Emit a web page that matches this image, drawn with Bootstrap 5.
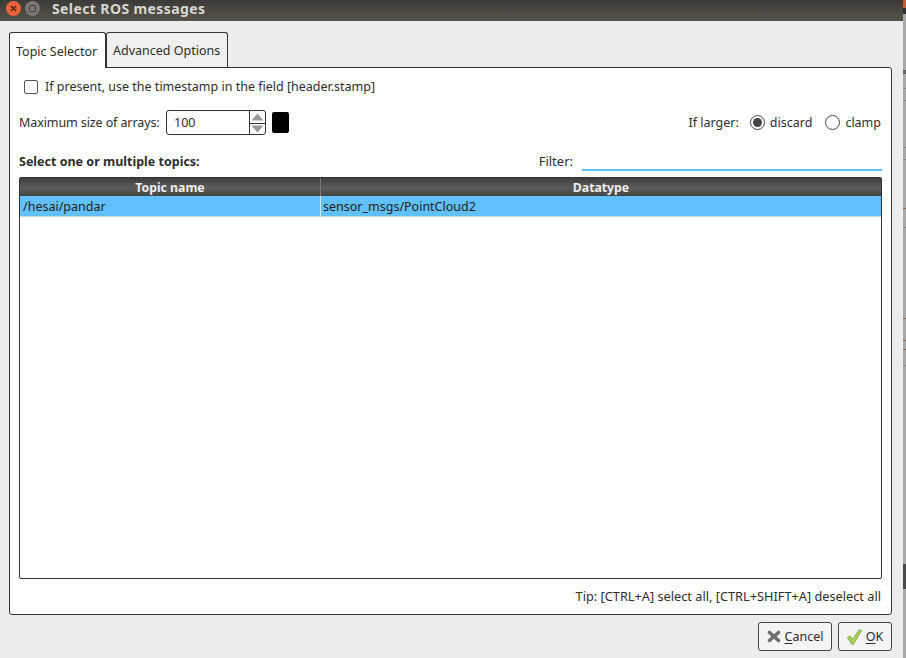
<!DOCTYPE html>
<html lang="en">
<head>
    <meta charset="UTF-8">
    <title>Select ROS messages</title>
    <link href="https://cdn.jsdelivr.net/npm/bootstrap@5.3.3/dist/css/bootstrap.min.css" rel="stylesheet">
    <style>
        html, body { height: 100%; }
        body { background: #ececec; color: #2e2e2e; font: 12.5px/16px "Noto Sans", sans-serif; overflow: hidden; }
        .app-frame { width: 906px; height: 658px; }
        .dlg { width: 903px; }
        .side-strip { width: 3px; background: linear-gradient(#d9552b 8px, #2f2f2f 8px, #2f2f2f 14px, #a8a8a8 14px, #a8a8a8 70px, #666 70px, #666 74px, #a8a8a8 74px, #a8a8a8 88px, #888 88px, #888 89px, #a8a8a8 89px, #a8a8a8 100px, #888 100px, #888 101px, #a8a8a8 101px, #a8a8a8 147px, #888 147px, #888 148px, #a8a8a8 148px, #a8a8a8 159px, #888 159px, #888 160px, #a8a8a8 160px, #a8a8a8 208px, #8a6a50 208px, #8a6a50 209px, #a8a8a8 209px, #a8a8a8 227px, #888 227px, #888 228px, #a8a8a8 228px, #a8a8a8 318px, #8a6a50 318px, #8a6a50 319px, #a8a8a8 319px, #a8a8a8 340px, #8a6a50 340px, #8a6a50 341px, #a8a8a8 341px, #a8a8a8 349px, #8a6a50 349px, #8a6a50 350px, #a8a8a8 350px, #a8a8a8 365px, #888 365px, #888 366px, #a8a8a8 366px, #a8a8a8 564px, #4a4a4a 564px, #4a4a4a 589px, #a8a8a8 589px); }
        .title-bar { height: 21px; background: linear-gradient(#3c3b37, #56534b); padding: 0 0 4px 6px; }
        .title-text { color: #d8d6cf; font-weight: 700; font-size: 14px; letter-spacing: .4px; margin-left: 8px; }
        .win-btn { width: 15px; height: 15px; border-radius: 50%; margin-right: 4px; }
        .win-close { background: #e9633a; }
        .win-max { background: #7a7870; }
        .tab-row { padding: 11px 0 0 9px; height: 46px; }
        .tab-on, .tab-off { border: 1px solid #333; border-bottom: 0; border-radius: 3px 3px 0 0; padding: 0 6px; white-space: nowrap; }
        .tab-on { background: #fff; width: 97px; height: 36px; line-height: 37px; margin-bottom: -1px; position: relative; z-index: 1; }
        .tab-off { background: #efefef; width: 122px; height: 35px; line-height: 35px; }
        .pane { margin-left: 9px; width: 883px; height: 548px; background: #fff; border: 1px solid #333; border-radius: 0 3px 3px 3px; padding: 0 9px; }
        .row-check { height: 36px; padding: 2px 0 0 5px; }
        .box-check { width: 14px; height: 14px; border: 1px solid #555; border-radius: 2px; margin-right: 7px; }
        .row-size { height: 37px; }
        .size-label { width: 147px; letter-spacing: -.1px; }
        .spin { width: 100px; height: 25px; border: 1px solid #333; border-radius: 3px; }
        .spin-val { width: 83px; padding-left: 7px; line-height: 23px; }
        .spin-btns { width: 16px; border-left: 1px solid #333; }
        .spin-up, .spin-down { height: 50%; }
        .spin-down { border-top: 1px solid #333; }
        .swatch { width: 17px; height: 21px; background: #000; border-radius: 2px; margin-left: 6px; }
        .radio-dot { width: 15px; height: 15px; border: 1px solid #444; border-radius: 50%; margin-right: 5px; }
        .radio-dot.picked::after { content: ""; width: 9px; height: 9px; border-radius: 50%; background: #444; }
        .larger-label { margin-right: 11px; }
        .discard-label { margin-right: 13px; }
        .end-label { margin-right: 1px; }
        .row-filter { height: 36px; padding-top: 6px; }
        .filter-label { font-size: 13px; margin-bottom: 2px; }
        .filter-line { width: 300px; height: 20px; border-bottom: 2px solid #61c0ff; margin: 0 0 2px 9px; }
        .topics { height: 402px; border: 1px solid #333; border-radius: 2px; }
        .topic-head { height: 18px; background: linear-gradient(#3f3f3f, #5c5c5c 55%, #454545); color: #eee; font-weight: 700; font-size: 12.25px; line-height: 19px; }
        .col-topic { width: 301px; border-right: 1px solid #777; }
        .topic-row { height: 21px; background: #61c0ff; border-bottom: 1px solid #c8d8e2; line-height: 21px; color: #222; }
        .topic-row .col-topic { padding-left: 3px; border-right: 1px solid #d0e4f2; }
        .topic-row .col-type { padding-left: 2px; }
        .tip { height: 35px; font-size: 12.75px; padding: 0 1px 2px 0; }
        .btn-bar { height: 43px; padding-top: 7px; margin-right: 11px; }
        .dlg-btn { height: 29px; border: 1px solid #444; border-radius: 3px; margin-left: 6px; background: #f4f4f4; }
        .dlg-cancel { width: 74px; }
        .dlg-ok { width: 54px; }
        .dlg-btn u { text-underline-offset: 2px; }
    </style>
</head>
<body>
    <div class="app-frame d-flex">
        <div class="dlg">
            <div class="title-bar d-flex align-items-center">
                <div class="win-btn win-close d-flex align-items-center justify-content-center">
                    <svg width="7" height="7" viewBox="0 0 7 7"><path d="M1 1 6 6M6 1 1 6" stroke="#5a1d0c" stroke-width="1.4"/></svg>
                </div>
                <div class="win-btn win-max d-flex align-items-center justify-content-center">
                    <svg width="7" height="7" viewBox="0 0 7 7"><rect x=".5" y=".5" width="6" height="6" rx="1" fill="none" stroke="#3c3b37"/></svg>
                </div>
                <div class="title-text">Select ROS messages</div>
            </div>
            <div class="tab-row d-flex align-items-start">
                <div class="tab-on">Topic Selector</div>
                <div class="tab-off">Advanced Options</div>
            </div>
            <div class="pane">
                <div class="row-check d-flex align-items-center">
                    <div class="box-check"></div>
                    <span>If present, use the timestamp in the field [header.stamp]</span>
                </div>
                <div class="row-size d-flex align-items-center">
                    <span class="size-label">Maximum size of arrays:</span>
                    <div class="spin d-flex">
                        <div class="spin-val">100</div>
                        <div class="spin-btns d-flex flex-column">
                            <div class="spin-up d-flex align-items-center justify-content-center">
                                <svg width="13" height="8" viewBox="0 0 13 8"><path d="M6.5 0.5 12.5 7.5H0.5Z" fill="#9a9a9a"/></svg>
                            </div>
                            <div class="spin-down d-flex align-items-center justify-content-center">
                                <svg width="13" height="8" viewBox="0 0 13 8"><path d="M0.5 0.5H12.5L6.5 7.5Z" fill="#9a9a9a"/></svg>
                            </div>
                        </div>
                    </div>
                    <div class="swatch"></div>
                    <span class="ms-auto larger-label">If larger:</span>
                    <div class="radio-dot picked d-flex align-items-center justify-content-center"></div>
                    <span class="discard-label">discard</span>
                    <div class="radio-dot"></div>
                    <span class="end-label">clamp</span>
                </div>
                <div class="row-filter d-flex align-items-center">
                    <span class="fw-bold">Select one or multiple topics:</span>
                    <span class="ms-auto filter-label">Filter:</span>
                    <div class="filter-line"></div>
                </div>
                <div class="topics">
                    <div class="topic-head d-flex">
                        <div class="col-topic text-center flex-shrink-0">Topic name</div>
                        <div class="flex-grow-1 text-center">Datatype</div>
                    </div>
                    <div class="topic-row d-flex">
                        <div class="col-topic flex-shrink-0">/hesai/pandar</div>
                        <div class="col-type">sensor_msgs/PointCloud2</div>
                    </div>
                </div>
                <div class="tip d-flex align-items-center justify-content-end">Tip: [CTRL+A] select all, [CTRL+SHIFT+A] deselect all</div>
            </div>
            <div class="btn-bar d-flex justify-content-end">
                <div class="dlg-btn dlg-cancel d-flex align-items-center justify-content-center gap-1">
                    <svg width="14" height="13" viewBox="0 0 14 13"><path d="M2.5 2.5 11.5 10.5M11.5 2.5 2.5 10.5" stroke="#6e6e6e" stroke-width="3.6" stroke-linecap="round"/></svg>
                    <span><u>C</u>ancel</span>
                </div>
                <div class="dlg-btn dlg-ok d-flex align-items-center justify-content-center gap-1">
                    <svg width="15" height="16" viewBox="0 0 15 16"><path d="M.5 8.5 3 6.8 5.5 10.3 12.3.7 14.5 1.6 6.5 15.3H4.7Z" fill="#a9cf58" stroke="#6f9a2c" stroke-width=".7"/></svg>
                    <span><u>O</u>K</span>
                </div>
            </div>
        </div>
        <div class="side-strip"></div>
    </div>
    <script src="https://cdn.jsdelivr.net/npm/bootstrap@5.3.3/dist/js/bootstrap.bundle.min.js"></script>
</body>
</html>
